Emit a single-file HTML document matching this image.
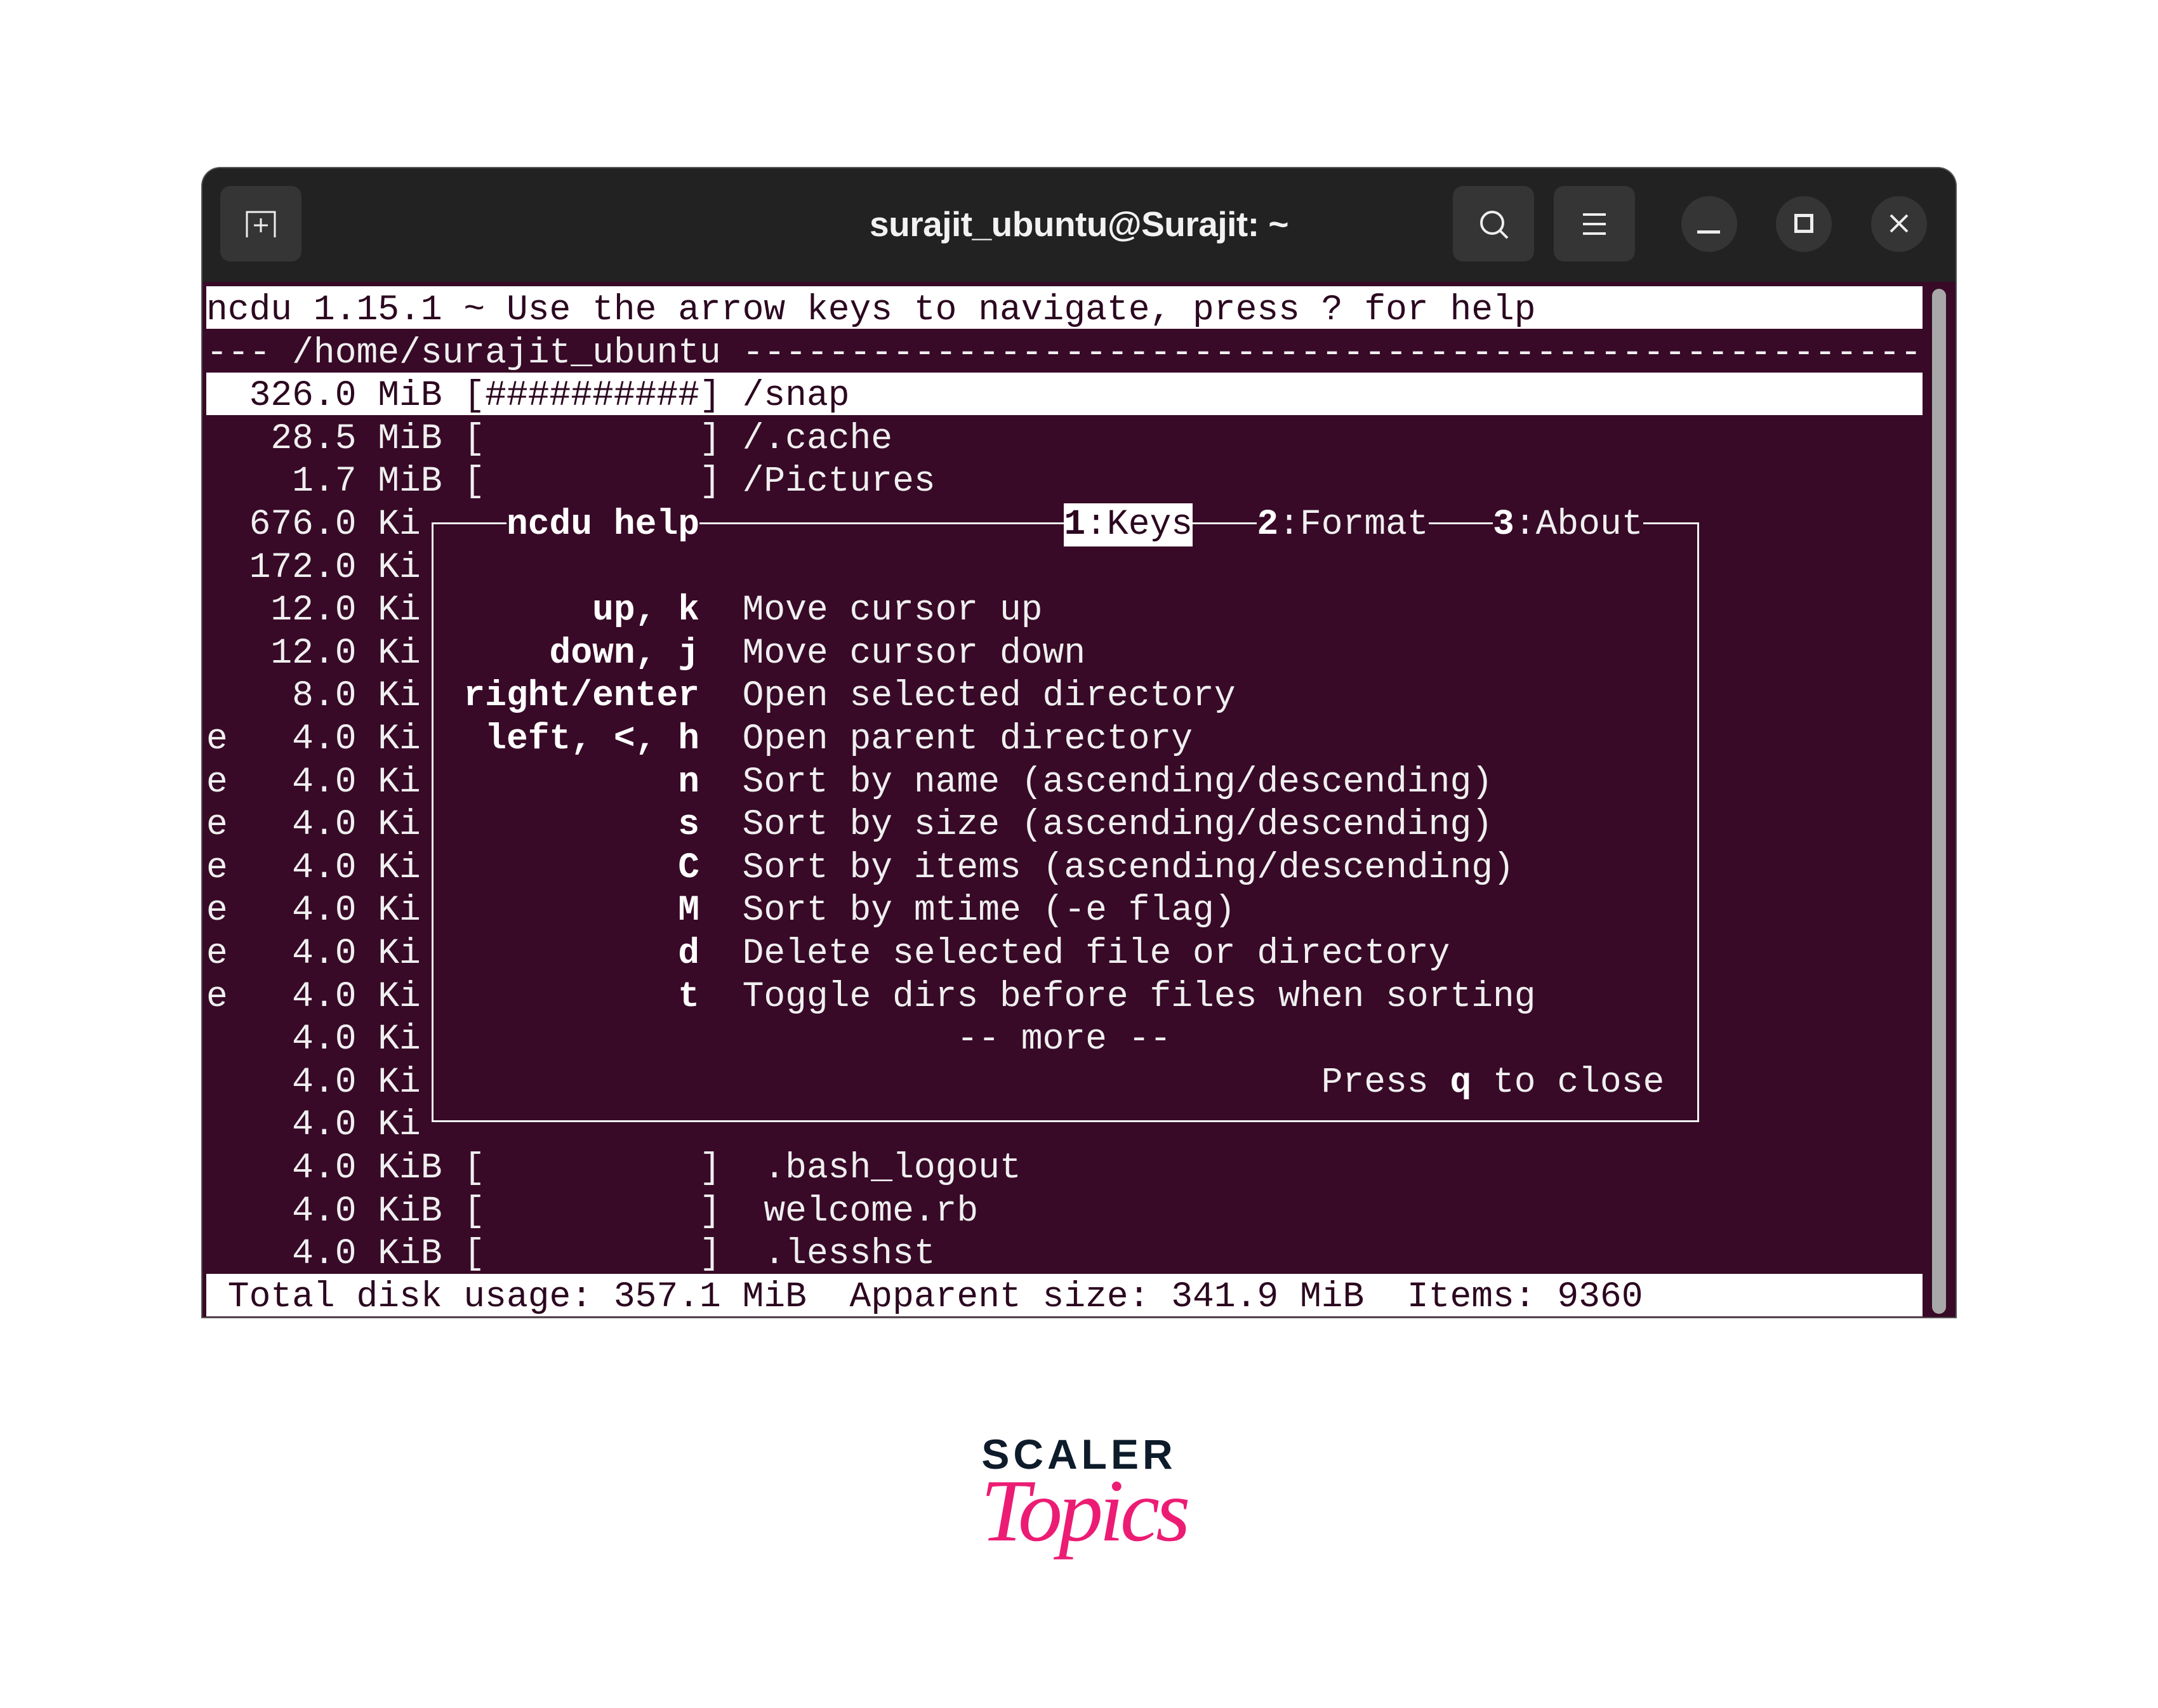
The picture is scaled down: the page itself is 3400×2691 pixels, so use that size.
<!DOCTYPE html>
<html><head><meta charset="utf-8"><style>
html,body{margin:0;padding:0;background:#fff;width:3400px;height:2691px;overflow:hidden;position:relative}
.win{position:absolute;left:319px;top:265px;width:2762px;height:1810px;background:#380a27;border-radius:28px 28px 0 0;overflow:hidden;box-shadow:0 0 0 2px #555}
.tb{position:absolute;left:0;top:0;width:100%;height:179px;background:#222}
.btn{position:absolute;background:#353535;border-radius:16px}
.circ{position:absolute;width:88px;height:88px;border-radius:50%;background:#353535}
.title{position:absolute;left:0;width:100%;top:56px;text-align:center;color:#f2f2f2;font:bold 55px "Liberation Sans",sans-serif;letter-spacing:-0.5px}
.term{position:absolute;left:0;top:4px;font-family:"Liberation Mono",monospace;font-size:56.3px;color:#efefef}
.row{position:absolute;left:325px;height:67.6px;line-height:67.6px;white-space:pre}
.hl{background:#fff;color:#2c0820;width:2704px}
.s{position:absolute;top:0;white-space:pre}
b{font-weight:bold;color:#fff}
.box{position:absolute;left:680px;top:821px;width:1997px;height:945px;border:3px solid #f4f4f4;box-sizing:border-box}
.bg{background:#380a27}
</style></head><body>
<div class="win">
 <div class="tb">
  <div class="btn" style="left:28px;top:28px;width:128px;height:119px"></div>
  <svg style="position:absolute;left:66px;top:65px" width="52" height="46" viewBox="0 0 52 46"><path d="M4 44 V4 H48 V44" fill="none" stroke="#eee" stroke-width="3"/><path d="M26 14 V36 M15 25 H37" stroke="#eee" stroke-width="3"/></svg>
  <div class="title">surajit_ubuntu@Surajit: ~</div>
  <div class="btn" style="left:1970px;top:28px;width:128px;height:119px"></div>
  <svg style="position:absolute;left:2008px;top:62px" width="56" height="56" viewBox="0 0 56 56"><circle cx="24" cy="24" r="17" fill="none" stroke="#eee" stroke-width="4"/><path d="M36 36 L48 48" stroke="#eee" stroke-width="4"/></svg>
  <div class="btn" style="left:2129px;top:28px;width:128px;height:119px"></div>
  <svg style="position:absolute;left:2173px;top:68px" width="40" height="40" viewBox="0 0 40 40"><path d="M2 5 H38 M2 20 H38 M2 35 H38" stroke="#eee" stroke-width="4"/></svg>
  <div class="circ" style="left:2330px;top:44px"></div>
  <div style="position:absolute;left:2355px;top:98px;width:36px;height:5px;background:#eee"></div>
  <div class="circ" style="left:2479px;top:44px"></div>
  <div style="position:absolute;left:2508px;top:72px;width:30px;height:30px;border:5px solid #eee;box-sizing:border-box"></div>
  <div class="circ" style="left:2629px;top:44px"></div>
  <svg style="position:absolute;left:2656px;top:70px" width="34" height="34" viewBox="0 0 34 34"><path d="M4 4 L30 30 M30 4 L4 30" stroke="#eee" stroke-width="4"/></svg>
 </div>
 <div style="position:absolute;left:2725px;top:190px;width:22px;height:1615px;background:#a8a8a8;border-radius:11px"></div>
</div>
<div style="position:absolute;left:325px;top:451px;width:2704px;height:67px;background:#fff"></div>
<div style="position:absolute;left:325px;top:587px;width:2704px;height:67px;background:#fff"></div>
<div style="position:absolute;left:325px;top:2007px;width:2704px;height:67px;background:#fff"></div>
<div class="term">
 <div class="box" style="top:819px"></div>
 <div class="row" style="top:451px;color:#2c0820">ncdu 1.15.1 ~ Use the arrow keys to navigate, press ? for help</div>
 <div class="row" style="top:518.6px">--- /home/surajit_ubuntu -------------------------------------------------------</div>
 <div class="row" style="top:586.2px;color:#2c0820">  326.0 MiB [##########] /snap</div>
 <div class="row" style="top:653.8px">   28.5 MiB [          ] /.cache</div>
 <div class="row" style="top:721.4px">    1.7 MiB [          ] /Pictures</div>
 <div class="row" style="top:789px">  676.0 Ki<span class="s bg" style="left:14ch"><b>ncdu help</b></span><span class="s" style="left:40ch;background:#fff;color:#2c0820"><b style="color:#2c0820">1</b>:Keys</span><span class="s bg" style="left:49ch"><b>2</b>:Format</span><span class="s bg" style="left:60ch"><b>3</b>:About</span></div>
 <div class="row" style="top:856.6px">  172.0 Ki</div>
 <div class="row" style="top:924.2px">   12.0 Ki<span class="s" style="left:18ch"><b>up, k</b></span><span class="s" style="left:25ch">Move cursor up</span></div>
 <div class="row" style="top:991.8px">   12.0 Ki<span class="s" style="left:16ch"><b>down, j</b></span><span class="s" style="left:25ch">Move cursor down</span></div>
 <div class="row" style="top:1059.4px">    8.0 Ki<span class="s" style="left:12ch"><b>right/enter</b></span><span class="s" style="left:25ch">Open selected directory</span></div>
 <div class="row" style="top:1127px">e   4.0 Ki<span class="s" style="left:13ch"><b>left, &lt;, h</b></span><span class="s" style="left:25ch">Open parent directory</span></div>
 <div class="row" style="top:1194.6px">e   4.0 Ki<span class="s" style="left:22ch"><b>n</b></span><span class="s" style="left:25ch">Sort by name (ascending/descending)</span></div>
 <div class="row" style="top:1262.2px">e   4.0 Ki<span class="s" style="left:22ch"><b>s</b></span><span class="s" style="left:25ch">Sort by size (ascending/descending)</span></div>
 <div class="row" style="top:1329.8px">e   4.0 Ki<span class="s" style="left:22ch"><b>C</b></span><span class="s" style="left:25ch">Sort by items (ascending/descending)</span></div>
 <div class="row" style="top:1397.4px">e   4.0 Ki<span class="s" style="left:22ch"><b>M</b></span><span class="s" style="left:25ch">Sort by mtime (-e flag)</span></div>
 <div class="row" style="top:1465px">e   4.0 Ki<span class="s" style="left:22ch"><b>d</b></span><span class="s" style="left:25ch">Delete selected file or directory</span></div>
 <div class="row" style="top:1532.6px">e   4.0 Ki<span class="s" style="left:22ch"><b>t</b></span><span class="s" style="left:25ch">Toggle dirs before files when sorting</span></div>
 <div class="row" style="top:1600.2px">    4.0 Ki<span class="s" style="left:35ch">-- more --</span></div>
 <div class="row" style="top:1667.8px">    4.0 Ki<span class="s" style="left:52ch">Press <b>q</b> to close</span></div>
 <div class="row" style="top:1735.4px">    4.0 Ki</div>
 <div class="row" style="top:1803px">    4.0 KiB [          ]  .bash_logout</div>
 <div class="row" style="top:1870.6px">    4.0 KiB [          ]  welcome.rb</div>
 <div class="row" style="top:1938.2px">    4.0 KiB [          ]  .lesshst</div>
 <div class="row" style="top:2005.8px;color:#2c0820"> Total disk usage: 357.1 MiB  Apparent size: 341.9 MiB  Items: 9360</div>
</div>
<div style="position:absolute;left:1540px;top:2253px;width:320px;text-align:center;font:bold 66px 'Liberation Sans',sans-serif;letter-spacing:6px;color:#0d1b2a">SCALER</div>
<div style="position:absolute;left:1545px;top:2300px;width:310px;text-align:center;font:italic 140px 'Liberation Serif',serif;color:#ec1c74;letter-spacing:-6px">Topics</div>
</body></html>
